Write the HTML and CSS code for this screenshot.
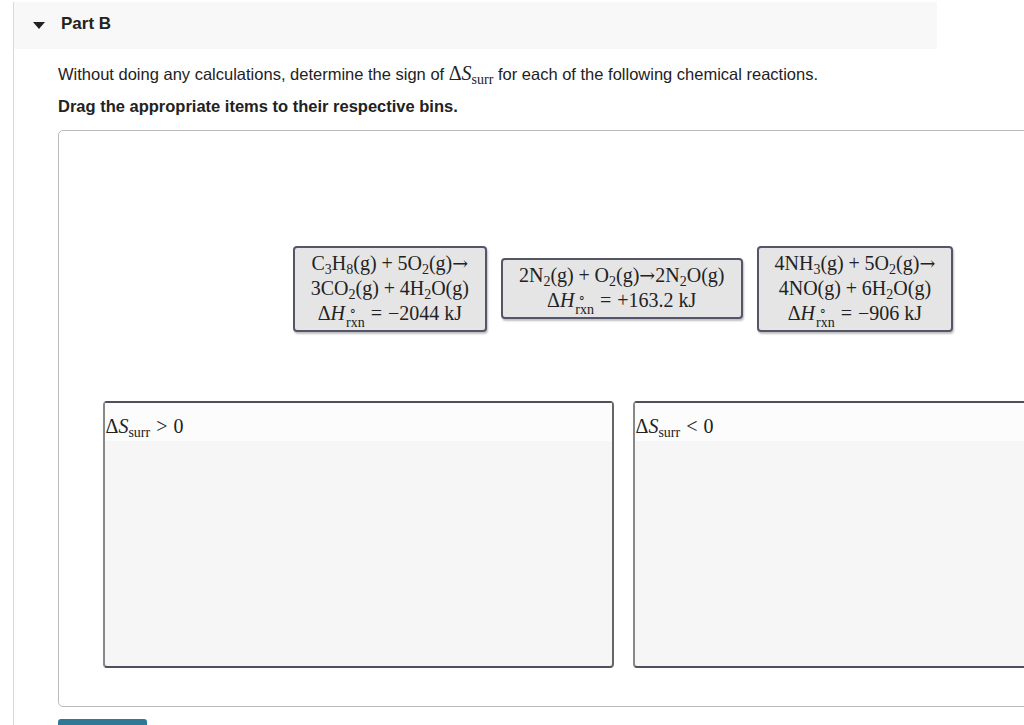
FILE: index.html
```html
<!DOCTYPE html>
<html lang="en">
<head>
  <meta charset="UTF-8">
  <meta name="viewport" content="width=device-width, initial-scale=1.0">
  <title>Part B</title>
  <link rel="stylesheet" href="styles.css">
</head>
<body>
  <div class="part">
    <div class="part-header">
      <span class="caret"></span>
      <h2>Part B</h2>
    </div>

    <div class="part-body">
      <p class="prompt">Without doing any calculations, determine the sign of <span class="math">Δ<i>S</i><sub>surr</sub></span> for each of the following chemical reactions.</p>
      <p class="hint">Drag the appropriate items to their respective bins.</p>

      <div class="dnd">
        <div class="items">
          <div class="item">
            <div class="line">C<sub>3</sub>H<sub>8</sub>(g)<span class="op">+</span>5O<sub>2</sub>(g)<span class="arrow">→</span></div>
            <div class="line">3CO<sub>2</sub>(g)<span class="op">+</span>4H<sub>2</sub>O(g)</div>
            <div class="line">Δ<i>H</i><span class="stack"><span class="deg">∘</span><span>rxn</span></span><span class="rel">=</span>−2044 kJ</div>
          </div>
          <div class="item">
            <div class="line">2N<sub>2</sub>(g)<span class="op">+</span>O<sub>2</sub>(g)<span class="arrow">→</span>2N<sub>2</sub>O(g)</div>
            <div class="line">Δ<i>H</i><span class="stack"><span class="deg">∘</span><span>rxn</span></span><span class="rel">=</span>+163.2 kJ</div>
          </div>
          <div class="item">
            <div class="line">4NH<sub>3</sub>(g)<span class="op">+</span>5O<sub>2</sub>(g)<span class="arrow">→</span></div>
            <div class="line">4NO(g)<span class="op">+</span>6H<sub>2</sub>O(g)</div>
            <div class="line">Δ<i>H</i><span class="stack"><span class="deg">∘</span><span>rxn</span></span><span class="rel">=</span>−906 kJ</div>
          </div>
        </div>

        <div class="bins">
          <div class="bin">
            <div class="bin-label">Δ<i>S</i><sub>surr</sub><span class="rel">&gt;</span>0</div>
            <div class="bin-drop"></div>
          </div>
          <div class="bin">
            <div class="bin-label">Δ<i>S</i><sub>surr</sub><span class="rel">&lt;</span>0</div>
            <div class="bin-drop"></div>
          </div>
        </div>
      </div>

      <button class="submit" aria-label="Submit"></button>
    </div>
  </div>
</body>
</html>
```

FILE: styles.css
```css
body { margin: 0; font-family: "Liberation Sans", Arial, sans-serif; color: #222; background: #fff; overflow: hidden; height: 725px; }
.part { margin-left: 13px; border-left: 1px solid #d3d9e0; min-height: 725px; }
.part-header { display: flex; align-items: center; width: 923px; height: 47px; margin-top: 2px; background: #f8f8f8; }
.caret { width: 0; height: 0; margin-left: 19px; border-left: 6px solid transparent; border-right: 6px solid transparent; border-top: 7px solid #222; }
.part-header h2 { margin: 0 0 4px 16px; font-size: 17px; font-weight: bold; }
.part-body { padding-left: 44px; }
.prompt { margin: 14px 0 0; font-size: 16.5px; line-height: 20px; }
.hint { margin: 12px 0 0; font-size: 16.5px; font-weight: bold; line-height: 20px; }
.math, .item, .bin-label { font-family: "Liberation Serif", "Times New Roman", serif; }
.prompt .math { font-size: 20px; }
sub { font-size: 0.7em; vertical-align: -0.3em; line-height: 0; }
.op { margin: 0 0.24em; }
.rel { margin: 0 0.3em; }
.arrow { font-family: "DejaVu Serif", serif; font-size: 0.95em; }
/* degree sign over the rxn subscript */
.stack { display: inline-block; vertical-align: -0.5em; font-size: 0.7em; line-height: 0.9em; text-align: left; margin-left: 1px; }
.stack span { display: block; }
.stack .deg { font-size: 0.85em; line-height: 0.8em; padding-left: 3px; }

.dnd { width: 1128px; margin-top: 14px; padding: 113px 0 38px; border: 1px solid #bbb; border-radius: 5px; }
.items { display: flex; justify-content: center; align-items: center; gap: 14px; height: 89px; }
.item { background: #e5e5e5; border: 2px solid #55556a; border-radius: 4px; box-shadow: 1px 2px 2px rgba(0,0,0,0.25); padding: 3px 16px 4px; text-align: center; font-size: 20px; }
.line { line-height: 25px; height: 25px; white-space: nowrap; }

.bins { display: flex; justify-content: center; gap: 19px; margin-top: 68px; }
.bin { width: 507px; height: 263px; display: flex; flex-direction: column; border: 2px solid #666; border-top-color: #4f4f60; border-bottom-color: #4f4f60; border-left-color: #888; border-radius: 4px; background: #f6f6f6; }
.bin-label { height: 38px; padding-left: 1px; background: #fcfcfc; font-size: 20px; line-height: 46px; }
.bin-drop { flex: 1; }

.submit { display: block; margin-top: 12px; width: 89px; height: 30px; border: none; border-radius: 3px; background: #2f7896; }
```
